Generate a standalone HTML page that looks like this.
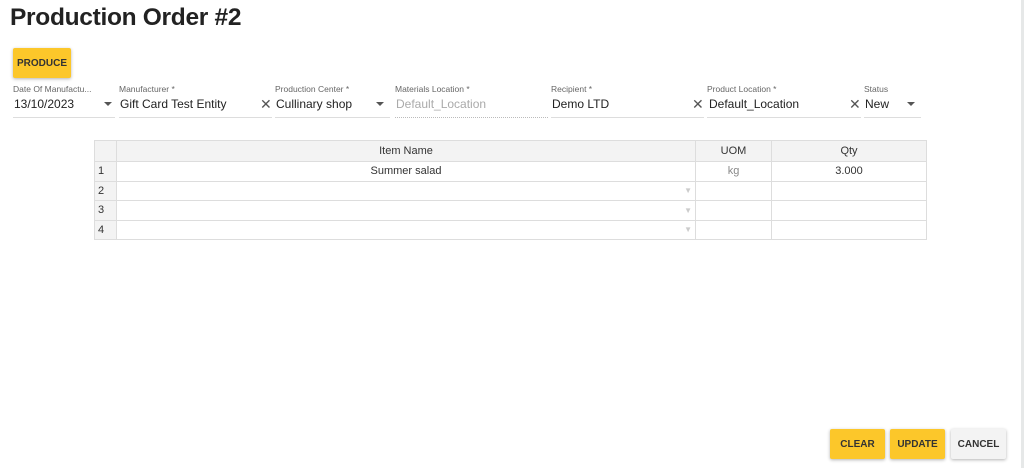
<!DOCTYPE html>
<html><head><style>
*{box-sizing:border-box;margin:0;padding:0}
body{width:1024px;height:468px;background:#fff;font-family:"Liberation Sans",Arial,sans-serif;position:relative;overflow:hidden;color:#222}
.a{position:absolute}
h1{position:absolute;left:10px;top:4px;font-size:24.5px;font-weight:bold;color:#222;letter-spacing:-0.3px}
.btn{position:absolute;background:#fcc72a;font-size:10px;font-weight:bold;color:#333;display:flex;align-items:center;justify-content:center;box-shadow:0 1px 3px rgba(0,0,0,.3);border-radius:2px}
.lbl{position:absolute;top:84px;font-size:8.5px;color:#666;white-space:nowrap}
.val{position:absolute;top:97px;font-size:12px;color:#222;white-space:nowrap}
.ul{position:absolute;top:117px;height:1px;background:#ddd}
.x{position:absolute;top:97px;font-size:14px;color:#555;line-height:14px}
.arr{position:absolute;top:102px;width:0;height:0;border-left:4px solid transparent;border-right:4px solid transparent;border-top:4px solid #555}
table{position:absolute;left:94px;top:140px;border-collapse:collapse;font-size:11px;color:#333}
td{border:1px solid #ddd;height:19.5px;padding:0 3px}
tr.h td{background:#f3f3f3;text-align:center;height:21px}
td.n{background:#f3f3f3;width:22px;text-align:left}
.dd{color:#ccc;font-size:8px;float:right}
</style></head><body>
<h1>Production Order #2</h1>
<div class="btn" style="left:13px;top:48px;width:58px;height:30px">PRODUCE</div>

<div class="lbl" style="left:13px">Date Of Manufactu...</div>
<div class="val" style="left:14px">13/10/2023</div>
<div class="arr" style="left:104px"></div>
<div class="ul" style="left:13px;width:102px"></div>

<div class="lbl" style="left:119px">Manufacturer *</div>
<div class="val" style="left:120px">Gift Card Test Entity</div>
<div class="x" style="left:260px">✕</div>
<div class="ul" style="left:119px;width:153px"></div>

<div class="lbl" style="left:275px">Production Center *</div>
<div class="val" style="left:276px">Cullinary shop</div>
<div class="arr" style="left:376px"></div>
<div class="ul" style="left:275px;width:115px"></div>

<div class="lbl" style="left:395px">Materials Location *</div>
<div class="val" style="left:396px;color:#aaa">Default_Location</div>
<div class="ul" style="left:395px;width:153px;background:none;border-top:1px dotted #bbb"></div>

<div class="lbl" style="left:551px">Recipient *</div>
<div class="val" style="left:552px">Demo LTD</div>
<div class="x" style="left:692px">✕</div>
<div class="ul" style="left:551px;width:153px"></div>

<div class="lbl" style="left:707px">Product Location *</div>
<div class="val" style="left:709px">Default_Location</div>
<div class="x" style="left:849px">✕</div>
<div class="ul" style="left:707px;width:154px"></div>

<div class="lbl" style="left:864px">Status</div>
<div class="val" style="left:865px">New</div>
<div class="arr" style="left:907px"></div>
<div class="ul" style="left:864px;width:57px"></div>

<table>
<tr class="h"><td class="n" style="width:22px"></td><td style="width:579px">Item Name</td><td style="width:76px">UOM</td><td style="width:155px">Qty</td></tr>
<tr><td class="n">1</td><td style="text-align:center">Summer salad</td><td style="text-align:center;color:#888">kg</td><td style="text-align:center">3.000</td></tr>
<tr><td class="n">2</td><td><span class="dd">▼</span></td><td></td><td></td></tr>
<tr><td class="n">3</td><td><span class="dd">▼</span></td><td></td><td></td></tr>
<tr><td class="n">4</td><td><span class="dd">▼</span></td><td></td><td></td></tr>
</table>

<div class="btn" style="left:830px;top:429px;width:55px;height:30px">CLEAR</div>
<div class="btn" style="left:890px;top:429px;width:55px;height:30px">UPDATE</div>
<div class="btn" style="left:951px;top:429px;width:55px;height:30px;background:#f3f3f3">CANCEL</div>
<div class="a" style="left:1021px;top:0;width:3px;height:468px;background:#e6e8e8"></div>
</body></html>
